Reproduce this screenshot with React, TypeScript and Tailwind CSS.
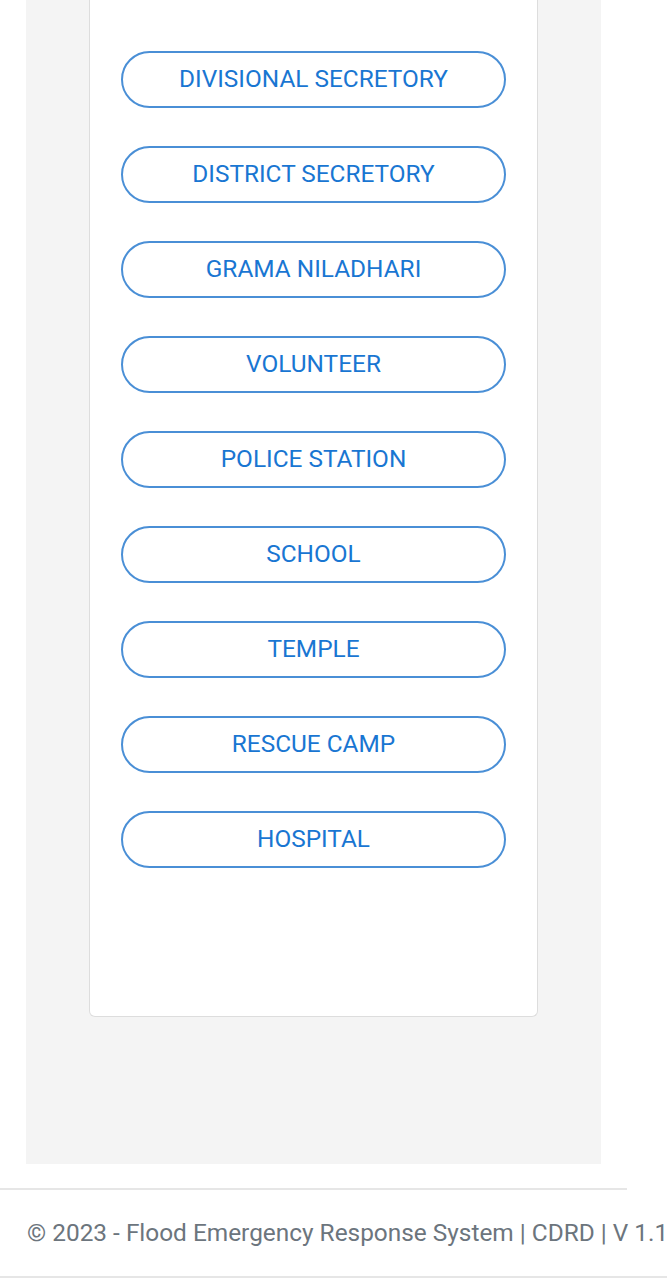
const roles = [
  "DIVISIONAL SECRETORY",
  "DISTRICT SECRETORY",
  "GRAMA NILADHARI",
  "VOLUNTEER",
  "POLICE STATION",
  "SCHOOL",
  "TEMPLE",
  "RESCUE CAMP",
  "HOSPITAL",
];

export default function App() {
  return (
    <div className="w-[667px] h-[1280px] overflow-hidden bg-white font-['Roboto',sans-serif]">
      {/* Grey content area */}
      <div className="ml-[26px] w-[575px] bg-[#f4f4f4] pl-[63px] pb-[147px]">
        <div className="w-[449px] bg-white border border-t-0 border-[#dddddd] rounded-b-[6px] px-[31px] pt-[51px] pb-[148px] flex flex-col gap-[38px]">
          {roles.map((r) => (
            <button
              key={r}
              className="h-[57px] w-full rounded-full border-2 border-[#4a8fd6] bg-white text-[#1976d2] text-[24.4px] leading-none"
            >
              {r}
            </button>
          ))}
        </div>
      </div>

      {/* Footer */}
      <div className="mt-[24px] w-[627px] border-t-2 border-[#e6e6e6]" />
      <div className="h-[88px] flex items-center pl-[27px] border-b-2 border-[#e6e6e6] whitespace-nowrap text-[24.4px] text-[#6c757d]">
        © 2023 - Flood Emergency Response System | CDRD | V 1.1
      </div>
    </div>
  );
}
